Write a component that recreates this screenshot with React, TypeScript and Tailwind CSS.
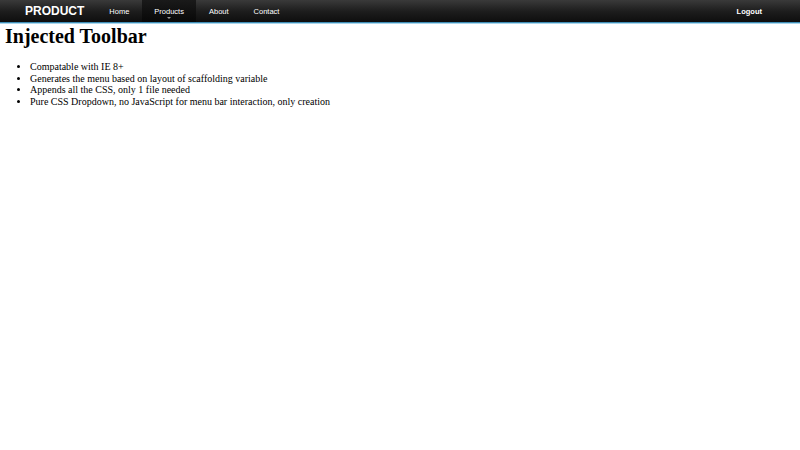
import React from 'react';

const navItems = ['Home', 'Products', 'About', 'Contact'];

const features = [
  'Compatable with IE 8+',
  'Generates the menu based on layout of scaffolding variable',
  'Appends all the CSS, only 1 file needed',
  'Pure CSS Dropdown, no JavaScript for menu bar interaction, only creation',
];

const Toolbar: React.FC = () => {
  return (
    <div className="w-full">
      <div className="h-[22px] flex items-stretch bg-gradient-to-b from-[#3a3a3a] via-[#1e1e1e] to-[#0e0e0e] font-['Liberation_Sans',Arial,sans-serif] text-white">
        <div className="pl-[25px] pr-[12.5px] flex items-center text-[12px] font-bold leading-none">
          PRODUCT
        </div>
        {navItems.map(item => (
          <div
            key={item}
            className={
              item === 'Products'
                ? 'relative px-[12.5px] pt-[1px] flex items-center text-[7.5px] leading-none bg-gradient-to-b from-[#1a1a1a] to-[#080808]'
                : 'relative px-[12.5px] pt-[1px] flex items-center text-[7.5px] leading-none'
            }
          >
            <span>{item}</span>
            {item === 'Products' && (
              <span className="absolute left-1/2 -translate-x-1/2 bottom-[3px] w-0 h-0 border-l-[2px] border-r-[2px] border-t-[2px] border-l-transparent border-r-transparent border-t-[#9a9a9a]" />
            )}
          </div>
        ))}
        <div className="flex-1" />
        <div className="pr-[38px] pt-[1px] flex items-center text-[7.5px] font-bold leading-none">
          <span>Logout</span>
        </div>
      </div>
      <div className="h-[1px] bg-[#3f8db5]" />
      <div className="h-[1px] bg-[#a9d6ec]" />
    </div>
  );
};

export default function App() {
  return (
    <div className="w-[800px] h-[450px] bg-white overflow-hidden">
      <Toolbar />
      <div className="px-[5px] font-['Liberation_Serif','Times_New_Roman',serif] text-black">
        <h1 className="text-[20px] font-bold leading-[23px] mt-[1px] mb-[13px]">Injected Toolbar</h1>
        <ul className="list-disc pl-[25px] text-[10px] leading-[11.5px]">
          {features.map(f => (
            <li key={f}>{f}</li>
          ))}
        </ul>
      </div>
    </div>
  );
}
